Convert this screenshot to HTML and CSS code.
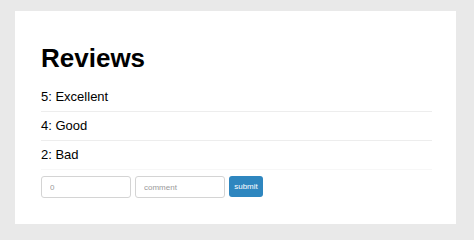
FILE: index.html
```html
<!DOCTYPE html>
<html lang="en">
<head>
    <meta charset="UTF-8">
    <meta name="viewport" content="width=device-width, initial-scale=1.0">
    <title>Reviews</title>
    <link rel="stylesheet" href="styles.css">
</head>
<body>
    <div class="card">
        <h1>Reviews</h1>
        <ul class="review-list">
            <li class="review">5: Excellent</li>
            <li class="review">4: Good</li>
            <li class="review">2: Bad</li>
        </ul>
        <form class="review-form" onsubmit="return false">
            <input type="text" class="field" placeholder="0">
            <input type="text" class="field" placeholder="comment">
            <button type="submit" class="submit-button">submit</button>
        </form>
    </div>
</body>
</html>
```

FILE: styles.css
```css
body {
    font-family: 'Liberation Sans', Arial, sans-serif;
    margin: 0;
    padding: 11px 18px 16px 15px;
    background-color: #e9e9e9;
    color: #000;
}

.card {
    background-color: #fff;
    padding: 32px 24px 26px 26px;
}

h1 {
    font-size: 26px;
    font-weight: bold;
    line-height: 30px;
    margin: 0 0 10px 0;
}

.review-list {
    list-style: none;
    margin: 0;
    padding: 0;
}

.review {
    font-size: 13px;
    line-height: 16px;
    padding: 6px 0;
    border-bottom: 1px solid #ededed;
}

.review:last-child {
    border-bottom-color: #f7f7f7;
}

.review-form {
    display: flex;
    gap: 4px;
    margin-top: 6px;
}

.field {
    box-sizing: border-box;
    width: 90px;
    height: 22px;
    padding: 0 8px;
    border: 1px solid #d4d4d4;
    border-radius: 3px;
    font-family: inherit;
    font-size: 8px;
    outline: none;
}

.field::placeholder {
    color: #9a9a9a;
}

.submit-button {
    box-sizing: border-box;
    width: 34px;
    height: 21px;
    padding: 0;
    background-color: #2e86bf;
    color: white;
    border: none;
    border-radius: 3px;
    font-family: inherit;
    font-size: 8px;
    cursor: pointer;
}
```
